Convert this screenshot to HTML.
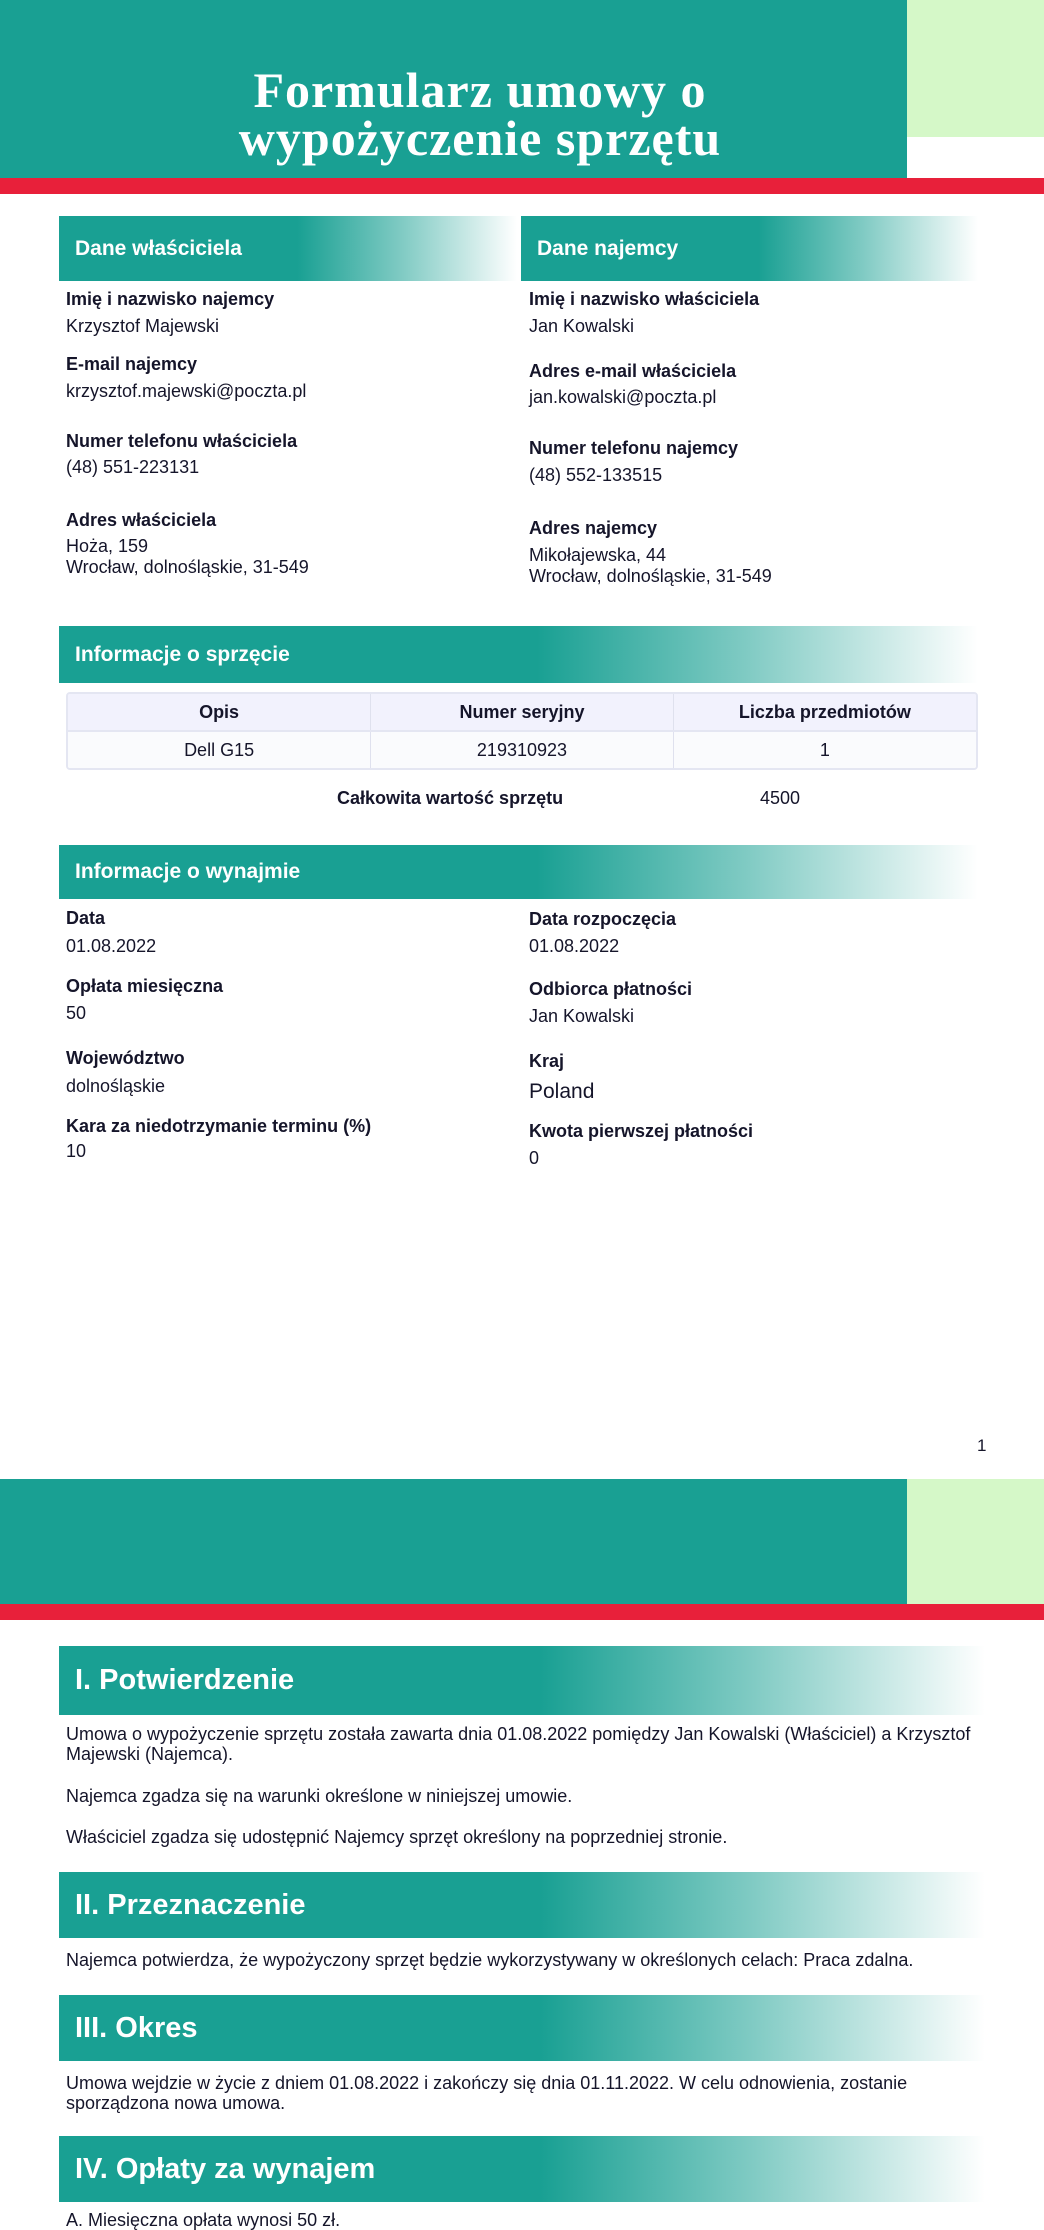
<!DOCTYPE html>
<html><head><meta charset="utf-8">
<style>
*{margin:0;padding:0;box-sizing:border-box}
body{width:1044px;height:2216px;position:relative;background:#fff;font-family:"Liberation Sans",sans-serif;color:#15152a;overflow:hidden}
.a{position:absolute;white-space:nowrap}
.teal{background:#19a093}
.hd{position:absolute;background:linear-gradient(90deg,#19a093 0%,#19a093 52%,rgba(25,160,147,0.55) 75%,rgba(255,255,255,0) 100%);color:#fff;font-weight:bold;display:flex;align-items:center;padding-left:16px}
.s{font-size:21px}
.b{font-size:29px;padding-left:16px}
.l{font-weight:bold;font-size:18px}
.v{font-size:18px}
.p{font-size:18px;line-height:20px}
table{border-collapse:collapse;width:100%;font-size:18px;table-layout:fixed}
td,th{border-right:1px solid #dfe1ee;text-align:center;height:37px}
td:last-child,th:last-child{border-right:none}
th{background:#f2f2fd;border-bottom:2px solid #e4e6f2}
td{background:#fafbfd}
</style></head><body>
<div class="a teal" style="left:0;top:0;width:907px;height:178px"></div>
<div class="a" style="left:907px;top:0;width:137px;height:137px;background:#d5f8c8"></div>
<div class="a" style="left:0;top:178px;width:1044px;height:16px;background:#e8203a"></div>
<div class="a" style="left:0;top:66px;width:960px;text-align:center;color:#fff;font-family:'Liberation Serif',serif;font-weight:bold;font-size:50px;line-height:48px;letter-spacing:1px">Formularz umowy o<br>wypożyczenie sprzętu</div>

<div class="hd s" style="left:59px;top:216px;width:458px;height:65px">Dane właściciela</div>
<div class="hd s" style="left:521px;top:216px;width:457px;height:65px">Dane najemcy</div>

<div class="a l" style="left:66px;top:289px">Imię i nazwisko najemcy</div>
<div class="a v" style="left:66px;top:316px">Krzysztof Majewski</div>
<div class="a l" style="left:66px;top:354px">E-mail najemcy</div>
<div class="a v" style="left:66px;top:381px">krzysztof.majewski@poczta.pl</div>
<div class="a l" style="left:66px;top:431px">Numer telefonu właściciela</div>
<div class="a v" style="left:66px;top:457px">(48) 551-223131</div>
<div class="a l" style="left:66px;top:510px">Adres właściciela</div>
<div class="a v" style="left:66px;top:536px;line-height:21px">Hoża, 159<br>Wrocław, dolnośląskie, 31-549</div>

<div class="a l" style="left:529px;top:289px">Imię i nazwisko właściciela</div>
<div class="a v" style="left:529px;top:316px">Jan Kowalski</div>
<div class="a l" style="left:529px;top:361px">Adres e-mail właściciela</div>
<div class="a v" style="left:529px;top:387px">jan.kowalski@poczta.pl</div>
<div class="a l" style="left:529px;top:438px">Numer telefonu najemcy</div>
<div class="a v" style="left:529px;top:465px">(48) 552-133515</div>
<div class="a l" style="left:529px;top:518px">Adres najemcy</div>
<div class="a v" style="left:529px;top:545px;line-height:21px">Mikołajewska, 44<br>Wrocław, dolnośląskie, 31-549</div>

<div class="hd s" style="left:59px;top:626px;width:919px;height:57px">Informacje o sprzęcie</div>
<div class="a" style="left:66px;top:692px;width:912px;border:2px solid #e4e6f2;border-radius:4px;overflow:hidden">
<table><tr><th>Opis</th><th>Numer seryjny</th><th>Liczba przedmiotów</th></tr>
<tr><td>Dell G15</td><td>219310923</td><td>1</td></tr></table></div>
<div class="a l" style="left:337px;top:788px">Całkowita wartość sprzętu</div>
<div class="a v" style="left:760px;top:788px">4500</div>

<div class="hd s" style="left:59px;top:845px;width:919px;height:54px">Informacje o wynajmie</div>
<div class="a l" style="left:66px;top:908px">Data</div>
<div class="a v" style="left:66px;top:936px">01.08.2022</div>
<div class="a l" style="left:66px;top:976px">Opłata miesięczna</div>
<div class="a v" style="left:66px;top:1003px">50</div>
<div class="a l" style="left:66px;top:1048px">Województwo</div>
<div class="a v" style="left:66px;top:1076px">dolnośląskie</div>
<div class="a l" style="left:66px;top:1116px">Kara za niedotrzymanie terminu (%)</div>
<div class="a v" style="left:66px;top:1141px">10</div>

<div class="a l" style="left:529px;top:909px">Data rozpoczęcia</div>
<div class="a v" style="left:529px;top:936px">01.08.2022</div>
<div class="a l" style="left:529px;top:979px">Odbiorca płatności</div>
<div class="a v" style="left:529px;top:1006px">Jan Kowalski</div>
<div class="a l" style="left:529px;top:1051px">Kraj</div>
<div class="a" style="left:529px;top:1080px;font-size:21px">Poland</div>
<div class="a l" style="left:529px;top:1121px">Kwota pierwszej płatności</div>
<div class="a v" style="left:529px;top:1148px">0</div>

<div class="a" style="left:977px;top:1436px;font-size:17px">1</div>

<div class="a teal" style="left:0;top:1479px;width:907px;height:125px"></div>
<div class="a" style="left:907px;top:1479px;width:137px;height:125px;background:#d5f8c8"></div>
<div class="a" style="left:0;top:1604px;width:1044px;height:16px;background:#e8203a"></div>

<div class="hd b" style="left:59px;top:1646px;width:926px;height:69px">I. Potwierdzenie</div>
<div class="a p" style="left:66px;top:1724px">Umowa o wypożyczenie sprzętu została zawarta dnia 01.08.2022 pomiędzy Jan Kowalski (Właściciel) a Krzysztof<br>Majewski (Najemca).</div>
<div class="a p" style="left:66px;top:1786px">Najemca zgadza się na warunki określone w niniejszej umowie.</div>
<div class="a p" style="left:66px;top:1827px">Właściciel zgadza się udostępnić Najemcy sprzęt określony na poprzedniej stronie.</div>

<div class="hd b" style="left:59px;top:1872px;width:926px;height:66px">II. Przeznaczenie</div>
<div class="a p" style="left:66px;top:1950px">Najemca potwierdza, że wypożyczony sprzęt będzie wykorzystywany w określonych celach: Praca zdalna.</div>

<div class="hd b" style="left:59px;top:1995px;width:926px;height:66px">III. Okres</div>
<div class="a p" style="left:66px;top:2073px">Umowa wejdzie w życie z dniem 01.08.2022 i zakończy się dnia 01.11.2022. W celu odnowienia, zostanie<br>sporządzona nowa umowa.</div>

<div class="hd b" style="left:59px;top:2136px;width:926px;height:66px">IV. Opłaty za wynajem</div>
<div class="a p" style="left:66px;top:2210px">A. Miesięczna opłata wynosi 50 zł.</div>
</body></html>
